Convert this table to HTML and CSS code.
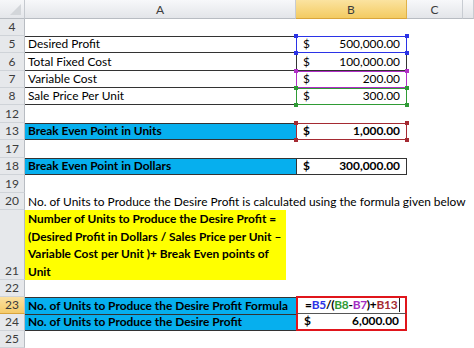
FILE: index.html
```html
<!DOCTYPE html>
<html lang="en">
<head>
    <meta charset="UTF-8">
    <title>Break Even Point</title>
    <link rel="stylesheet" href="styles.css">
</head>
<body>
    <div class="sheet">
        <!-- column headers -->
        <div class="corner"></div>
        <div class="col-head">A</div>
        <div class="col-head selected">B</div>
        <div class="col-head">C</div>
        <div class="col-head"></div>

        <div class="row-head">4</div>
        <div class="cell"></div>
        <div class="cell"></div>
        <div class="cell"></div>
        <div class="cell"></div>

        <div class="row-head">5</div>
        <div class="cell label boxed first">Desired Profit</div>
        <div class="cell money ref-blue"><span>$</span><span>500,000.00</span></div>
        <div class="cell"></div>
        <div class="cell"></div>

        <div class="row-head">6</div>
        <div class="cell label boxed">Total Fixed Cost</div>
        <div class="cell money ref-plain"><span>$</span><span>100,000.00</span></div>
        <div class="cell"></div>
        <div class="cell"></div>

        <div class="row-head">7</div>
        <div class="cell label boxed">Variable Cost</div>
        <div class="cell money ref-purple"><span>$</span><span>200.00</span></div>
        <div class="cell"></div>
        <div class="cell"></div>

        <div class="row-head">8</div>
        <div class="cell label boxed">Sale Price Per Unit</div>
        <div class="cell money ref-green"><span>$</span><span>300.00</span></div>
        <div class="cell"></div>
        <div class="cell"></div>

        <div class="row-head">12</div>
        <div class="cell"></div>
        <div class="cell"></div>
        <div class="cell"></div>
        <div class="cell"></div>

        <div class="row-head">13</div>
        <div class="cell label blue bar">Break Even Point in Units</div>
        <div class="cell money bold ref-red"><span>$</span><span>1,000.00</span></div>
        <div class="cell"></div>
        <div class="cell"></div>

        <div class="row-head">17</div>
        <div class="cell"></div>
        <div class="cell"></div>
        <div class="cell"></div>
        <div class="cell"></div>

        <div class="row-head">18</div>
        <div class="cell label blue bar">Break Even Point in Dollars</div>
        <div class="cell money bold ref-plain"><span>$</span><span>300,000.00</span></div>
        <div class="cell"></div>
        <div class="cell"></div>

        <div class="row-head">19</div>
        <div class="cell"></div>
        <div class="cell"></div>
        <div class="cell"></div>
        <div class="cell"></div>

        <div class="row-head">20</div>
        <div class="cell label overflow">No. of Units to Produce the Desire Profit is calculated using the formula given below</div>
        <div class="cell"></div>
        <div class="cell"></div>
        <div class="cell"></div>

        <div class="row-head">21</div>
        <div class="cell note-wrap">
            <div class="note">Number of Units to Produce the Desire Profit =<br>(Desired Profit in Dollars / Sales Price per Unit –<br>Variable Cost per Unit )+ Break Even points of<br>Unit</div>
        </div>
        <div class="cell"></div>
        <div class="cell"></div>
        <div class="cell"></div>

        <div class="row-head">22</div>
        <div class="cell"></div>
        <div class="cell"></div>
        <div class="cell"></div>
        <div class="cell"></div>

        <div class="row-head active">23</div>
        <div class="cell label blue bold line-top">No. of Units to Produce the Desire Profit Formula</div>
        <div class="cell formula"><span class="k">=</span><span class="c-blue">B5</span><span class="k">/(</span><span class="c-green">B8</span><span class="k">-</span><span class="c-purple">B7</span><span class="k">)+</span><span class="c-red">B13</span><span class="caret"></span></div>
        <div class="cell"></div>
        <div class="cell"></div>

        <div class="row-head">24</div>
        <div class="cell label blue bold line-both">No. of Units to Produce the Desire Profit</div>
        <div class="cell money bold result-bottom"><span>$</span><span>6,000.00</span></div>
        <div class="cell"></div>
        <div class="cell"></div>

        <div class="row-head">25</div>
        <div class="cell"></div>
        <div class="cell"></div>
        <div class="cell"></div>
        <div class="cell"></div>
    </div>
</body>
</html>
```

FILE: styles.css
```css
* {
    margin: 0;
    padding: 0;
    box-sizing: border-box;
}

body {
    font-family: Lato, 'Liberation Sans', sans-serif;
    font-size: 11.9px;
    color: #000;
    background: #fff;
    overflow: hidden;
}

.sheet {
    display: grid;
    grid-template-columns: 25px 271px 111px 56px 1fr;
    grid-template-rows: 19px 17px 17px 18px 17px 17px 18px 17px 18px 17px 18px 17px 70px 17px 17px 17px 17px;
    width: 474px;
    height: 348px;
}

.corner {
    background: linear-gradient(#f6f7f9, #e4e6ea);
    border-right: 1px solid #c5c9cf;
    border-bottom: 1px solid #b8bcc2;
    position: relative;
}

.corner::after {
    content: "";
    position: absolute;
    right: 3px;
    bottom: 3px;
    border-left: 11px solid transparent;
    border-bottom: 11px solid #d3d6da;
}

.col-head {
    background: linear-gradient(#f7f8fa, #e3e5e9);
    border-right: 1px solid #c8ccd2;
    border-bottom: 1px solid #b8bcc2;
    color: #3c3c3c;
    font-size: 12px;
    display: flex;
    align-items: center;
    justify-content: center;
}

.col-head.selected {
    background: linear-gradient(#fbe3a0, #f3cb62);
    border-right-color: #e0b248;
    border-bottom-color: #d9a53c;
}

.row-head {
    background: #e6e8eb;
    border-right: 1px solid #b8bcc2;
    border-bottom: 1px solid #cfd3d8;
    color: #3c3c3c;
    font-size: 12px;
    display: flex;
    align-items: flex-end;
    justify-content: center;
    line-height: 17px;
}

.row-head.active {
    background: linear-gradient(#fbe0a0, #f5cb6a);
    border-bottom-color: #d9a53c;
}

.cell {
    display: flex;
    align-items: flex-end;
    line-height: 16px;
    white-space: nowrap;
    min-width: 0;
    position: relative;
}

.label {
    padding-left: 3px;
}

.boxed {
    border-bottom: 1px solid #333;
}

.boxed.first {
    border-top: 1px solid #333;
}

.overflow {
    overflow: visible;
    z-index: 1;
}

.bold,
.bar {
    font-weight: bold;
}

.blue {
    background: #06afee;
    overflow: hidden;
}

.bar {
    border-top: 1px solid #333;
    border-bottom: 1px solid #333;
}

.line-top {
    border-top: 1px solid #333;
}

.line-both {
    border-top: 1px solid #333;
    border-bottom: 1px solid #333;
}

.money {
    justify-content: space-between;
    padding: 0 6px;
}

/* reference highlight boxes drawn around referenced cells */
.ref-blue {
    border: 1px solid #2b33e6;
}

.ref-plain {
    border: 1px solid #333;
    border-top: none;
}

.ref-purple {
    border: 1px solid #b02ec6;
}

.ref-green {
    border: 1px solid #2f9b35;
}

.ref-red {
    border: 1px solid #a52a32;
}

.bold.ref-plain {
    border-top: 1px solid #333;
}

.ref-blue::before,
.ref-blue::after,
.ref-purple::before,
.ref-purple::after,
.ref-green::before,
.ref-green::after,
.ref-red::before,
.ref-red::after {
    content: "";
    position: absolute;
    left: -3px;
    right: -3px;
    height: 4px;
    z-index: 2;
}

.ref-blue::before,
.ref-purple::before,
.ref-green::before,
.ref-red::before {
    top: -3px;
}

.ref-blue::after,
.ref-purple::after,
.ref-green::after,
.ref-red::after {
    bottom: -3px;
}

.ref-blue::before,
.ref-blue::after {
    background: linear-gradient(90deg, #2b33e6 4px, transparent 4px, transparent calc(100% - 4px), #2b33e6 calc(100% - 4px));
}

.ref-purple::before,
.ref-purple::after {
    background: linear-gradient(90deg, #b02ec6 4px, transparent 4px, transparent calc(100% - 4px), #b02ec6 calc(100% - 4px));
}

.ref-green::before,
.ref-green::after {
    background: linear-gradient(90deg, #2f9b35 4px, transparent 4px, transparent calc(100% - 4px), #2f9b35 calc(100% - 4px));
}

.ref-red::before,
.ref-red::after {
    background: linear-gradient(90deg, #a52a32 4px, transparent 4px, transparent calc(100% - 4px), #a52a32 calc(100% - 4px));
}

.note-wrap {
    align-items: stretch;
}

.note {
    width: 261px;
    background: #ffff00;
    font-weight: bold;
    line-height: 17.4px;
    padding: 0 0 0 3px;
    display: flex;
    flex-direction: column;
    justify-content: flex-end;
    white-space: nowrap;
}

.formula {
    font-weight: bold;
    padding-left: 7px;
    letter-spacing: -0.25px;
    border: 2px solid #e0151b;
    border-bottom: 1px solid #555;
    margin-top: -1px;
}

.result-bottom {
    border: 2px solid #e0151b;
    border-top: none;
}

.formula .k {
    color: #000;
}

.c-blue {
    color: #2b33e6;
}

.c-green {
    color: #2f9b35;
}

.c-purple {
    color: #a32fc4;
}

.c-red {
    color: #a52a32;
}

.caret {
    flex: none;
    width: 1px;
    height: 14px;
    background: #222;
    margin: 0 0 1px 2px;
}
```
